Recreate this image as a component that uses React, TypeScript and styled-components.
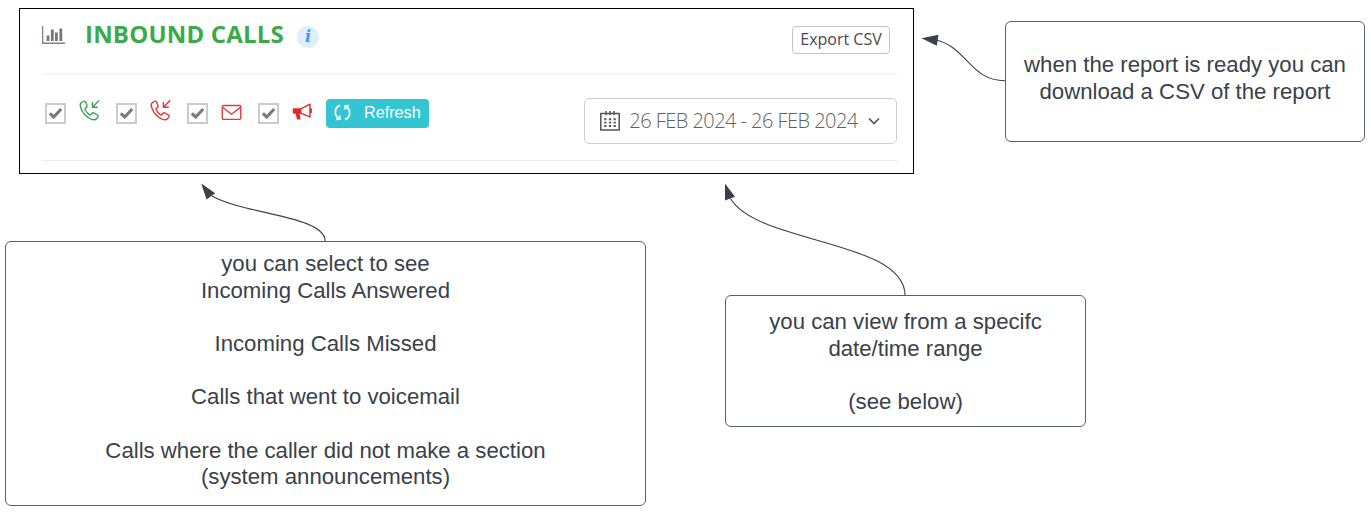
import React from 'react';
import styled, { createGlobalStyle } from 'styled-components';

const GlobalStyle = createGlobalStyle`
  * {
    box-sizing: border-box;
  }

  body {
    margin: 0;
    background: #ffffff;
  }
`;

// Styled Components
const Canvas = styled.main`
  position: relative;
  width: 1371px;
  height: 517px;
  overflow: hidden;
  font-family: 'Liberation Sans', Arial, sans-serif;
`;

const ReportPanel = styled.section`
  position: absolute;
  left: 19px;
  top: 8px;
  width: 895px;
  height: 166px;
  padding: 0 16px 0 22px;
  border: 1px solid #000000;
  background: #ffffff;
`;

const PanelHeader = styled.header`
  display: flex;
  align-items: flex-start;
  height: 66px;
  padding: 17px 7px 0 0;
  border-bottom: 2px solid #f5f5f5;
`;

const PanelTitle = styled.h1`
  margin: -9px 0 0 20px;
  color: #3aaa4b;
  font-family: 'Open Sans', sans-serif;
  font-size: 24px;
  font-weight: 700;
  letter-spacing: 0.19px;
  line-height: 34px;
  white-space: nowrap;
`;

const InfoBadge = styled.span`
  display: flex;
  align-items: center;
  justify-content: center;
  width: 22px;
  height: 22px;
  margin-left: 13px;
  border-radius: 50%;
  background: #deeefe;
  color: #3c98fb;
  font-family: 'DejaVu Serif', serif;
  font-size: 16px;
  font-style: italic;
  font-weight: 700;
  line-height: 22px;
`;

const ExportButton = styled.button`
  width: 98px;
  height: 28px;
  margin-left: auto;
  padding: 0 0 2px;
  border: 1px solid #c4c4c4;
  border-radius: 4px;
  background: #ffffff;
  color: #4a4a4a;
  font-family: 'Open Sans', sans-serif;
  font-size: 16px;
  line-height: 24px;
  white-space: nowrap;
`;

const FilterBar = styled.div`
  display: flex;
  align-items: flex-start;
  height: 86px;
  padding: 23px 0 0 3px;
  border-bottom: 1px solid #ededed;
`;

const FilterOption = styled.label`
  display: flex;
  align-items: center;
  gap: 13px;
  height: 30px;
  margin-right: 16px;
`;

const CheckMark = styled.span`
  display: flex;
  align-items: center;
  justify-content: center;
  width: 21px;
  height: 21px;
  border: 2px solid #cbcbcb;
`;

const FilterIcon = styled.svg<{ $color: string }>`
  width: 21px;
  height: 21px;
  margin-top: -5px;
  overflow: visible;
  fill: none;
  stroke: ${props => props.$color};
  stroke-width: 1.4;
  stroke-linecap: round;
  stroke-linejoin: round;
`;

const RefreshButton = styled.button`
  display: flex;
  align-items: center;
  gap: 13px;
  width: 103px;
  height: 29px;
  margin: 1px 0 0 -3px;
  padding: 0 0 2px 8px;
  border: 0;
  border-radius: 4px;
  background: #33c5d2;
  color: #ffffff;
  font-family: 'Liberation Sans', Arial, sans-serif;
  font-size: 16.2px;
`;

const DateRange = styled.button`
  display: flex;
  align-items: center;
  width: 313px;
  height: 46px;
  margin-left: auto;
  padding: 0 15px 1px;
  border: 1px solid #cfcfcf;
  border-radius: 5px;
  background: #ffffff;
  color: #5f5f5f;
  font-family: 'Open Sans', sans-serif;
  font-size: 20px;
  font-weight: 300;
  letter-spacing: -0.54px;
`;

const DateText = styled.span`
  width: 229px;
  margin: 0 10px 0 9px;
  white-space: nowrap;
`;

const Callout = styled.aside<{ $x: number; $y: number; $w: number; $h: number; $top: number }>`
  position: absolute;
  left: ${props => props.$x}px;
  top: ${props => props.$y}px;
  width: ${props => props.$w}px;
  height: ${props => props.$h}px;
  padding-top: ${props => props.$top}px;
  border: 1px solid #5b616b;
  border-radius: 6px;
  background: #ffffff;
  color: #3a414a;
  font-size: 22.2px;
  line-height: 26.67px;
  text-align: center;
  white-space: pre-line;
`;

const Connectors = styled.svg`
  position: absolute;
  inset: 0;
  pointer-events: none;
`;

const ChartIcon = () => (
  <svg width="23" height="19" viewBox="0 0 23 19" fill="none">
    <path d="M.6 0v17.2H23" stroke="#8a8080" strokeWidth="1.4" />
    <path d="M6 9.5V15M10.3 3.5V15M14.4 6.5V15M18.8 2.5V15" stroke="#777777" strokeWidth="2.8" />
  </svg>
);

const Check = () => (
  <CheckMark>
    <svg width="15" height="13" viewBox="0 0 15 13" fill="none">
      <path d="M1.8 6.4 5.7 10 13.2 2" stroke="#7a7a7a" strokeWidth="3.1" />
    </svg>
  </CheckMark>
);

const IncomingCallIcon = ({ color }: { color: string }) => (
  <FilterIcon $color={color} viewBox="0 0 21 21">
    <path d="M4.2 1.5 2.2 2.7C1 3.6 1 5.3 1.6 7.3 3 12.2 7.5 17.5 12.6 19.3 14.8 20 16.4 20 17.4 18.8l1.4-1.7c.7-.9.4-1.8-.5-2.3l-3.2-1.7c-.9-.5-1.7-.3-2.3.4l-.8 1c-.5.6-1.1.5-1.7.1-1.8-1.2-3.3-3-4.2-4.8-.3-.7-.2-1.2.4-1.6l1-.8c.7-.6.8-1.4.3-2.2L6.6 2c-.6-.9-1.5-1.1-2.4-.5Z" />
    <path d="M19.8 .8 13.6 7M13.4 2.4v4.8h4.9" />
  </FilterIcon>
);

const EnvelopeIcon = () => (
  <FilterIcon $color="#e23a3e" viewBox="0 0 21 21">
    <rect x="1.3" y="5.5" width="18.5" height="13.9" rx="1.3" />
    <path d="M1.6 7.2 10.5 14.2 19.5 7.2" />
  </FilterIcon>
);

const MegaphoneIcon = () => (
  <FilterIcon $color="#dc2b2b" viewBox="0 0 21 21">
    <path d="M1 8.2h8.5v5.6H7.6l1.1 5.8H5L3.7 13.8H1.3C.6 12 .6 10 1 8.2Z" fill="#dc2b2b" stroke="none" />
    <path d="M9.3 8.6 18 4.2v12.7l-8.7-3.5" />
    <path d="M18.9 9.2v3" strokeWidth="2" />
  </FilterIcon>
);

const RefreshIcon = () => (
  <svg width="17" height="17" viewBox="0 0 17 17" fill="none" stroke="#ffffff" strokeWidth="1.7">
    <path d="M6 1.4C.2 3.5 -.2 11.5 5 14.6M11 15.6C16.8 13.5 17.2 5.5 12 2.4" />
    <path d="M2 15.4 6 15 5.5 11.4M15 1.6 11 2l.5 3.6" />
  </svg>
);

const CalendarIcon = () => (
  <svg width="20" height="20" viewBox="0 0 20 20" fill="none">
    <path d="M.8 2.6h18.4v16.4H.8zM6 0v4.2M10 0v4.2M14 0v4.2" stroke="#555555" strokeWidth="1.5" />
    <path
      d="M4.2 8.2h2.2M8.9 8.2h2.2M13.6 8.2h2.2M4.2 11.6h2.2M8.9 11.6h2.2M13.6 11.6h2.2M4.2 15h2.2M8.9 15h2.2M13.6 15h2.2"
      stroke="#555555"
      strokeWidth="1.9"
    />
  </svg>
);

const ChevronIcon = () => (
  <svg width="12" height="8" viewBox="0 0 12 8" fill="none">
    <path d="M1 1.5 6 6.5 11 1.5" stroke="#555555" strokeWidth="1.7" />
  </svg>
);

const App: React.FC = () => {
  return (
    <>
      <GlobalStyle />
      <Canvas>
        <ReportPanel>
          <PanelHeader>
            <ChartIcon />
            <PanelTitle>INBOUND CALLS</PanelTitle>
            <InfoBadge>i</InfoBadge>
            <ExportButton>Export CSV</ExportButton>
          </PanelHeader>
          <FilterBar>
            <FilterOption>
              <Check />
              <IncomingCallIcon color="#3fa352" />
            </FilterOption>
            <FilterOption>
              <Check />
              <IncomingCallIcon color="#e0393c" />
            </FilterOption>
            <FilterOption>
              <Check />
              <EnvelopeIcon />
            </FilterOption>
            <FilterOption>
              <Check />
              <MegaphoneIcon />
            </FilterOption>
            <RefreshButton>
              <RefreshIcon />
              Refresh
            </RefreshButton>
            <DateRange>
              <CalendarIcon />
              <DateText>26 FEB 2024 - 26 FEB 2024</DateText>
              <ChevronIcon />
            </DateRange>
          </FilterBar>
        </ReportPanel>

        <Callout $x={1005} $y={21} $w={360} $h={121} $top={30}>
          {'when the report is ready you can\ndownload a CSV of the report'}
        </Callout>
        <Callout $x={5} $y={241} $w={641} $h={265} $top={9}>
          {`you can select to see
          Incoming Calls Answered

          Incoming Calls Missed

          Calls that went to voicemail

          Calls where the caller did not make a section
          (system announcements)`}
        </Callout>
        <Callout $x={725} $y={295} $w={361} $h={132} $top={13}>
          {'you can view from a specifc\ndate/time range\n\n(see below)'}
        </Callout>

        <Connectors width="1371" height="517" viewBox="0 0 1371 517">
          <g fill="none" stroke="#3a414a" strokeWidth="1.1">
            <path d="M1005 80.7C970 80.7 967 47 936 40" />
            <path d="M325.2 241C325.2 216 243 214 212 196" />
            <path d="M905 295.5C905 240 757 244 730.5 198.5" />
          </g>
          <g fill="#3a414a">
            <path d="M921.5 38.2 938.5 34.7 936.8 45.7Z" />
            <path d="M201.2 183.5 215.2 193.2 206.5 199.6Z" />
            <path d="M725 183.5 735 196.8 725 200.5Z" />
          </g>
        </Connectors>
      </Canvas>
    </>
  );
};

export default App;
